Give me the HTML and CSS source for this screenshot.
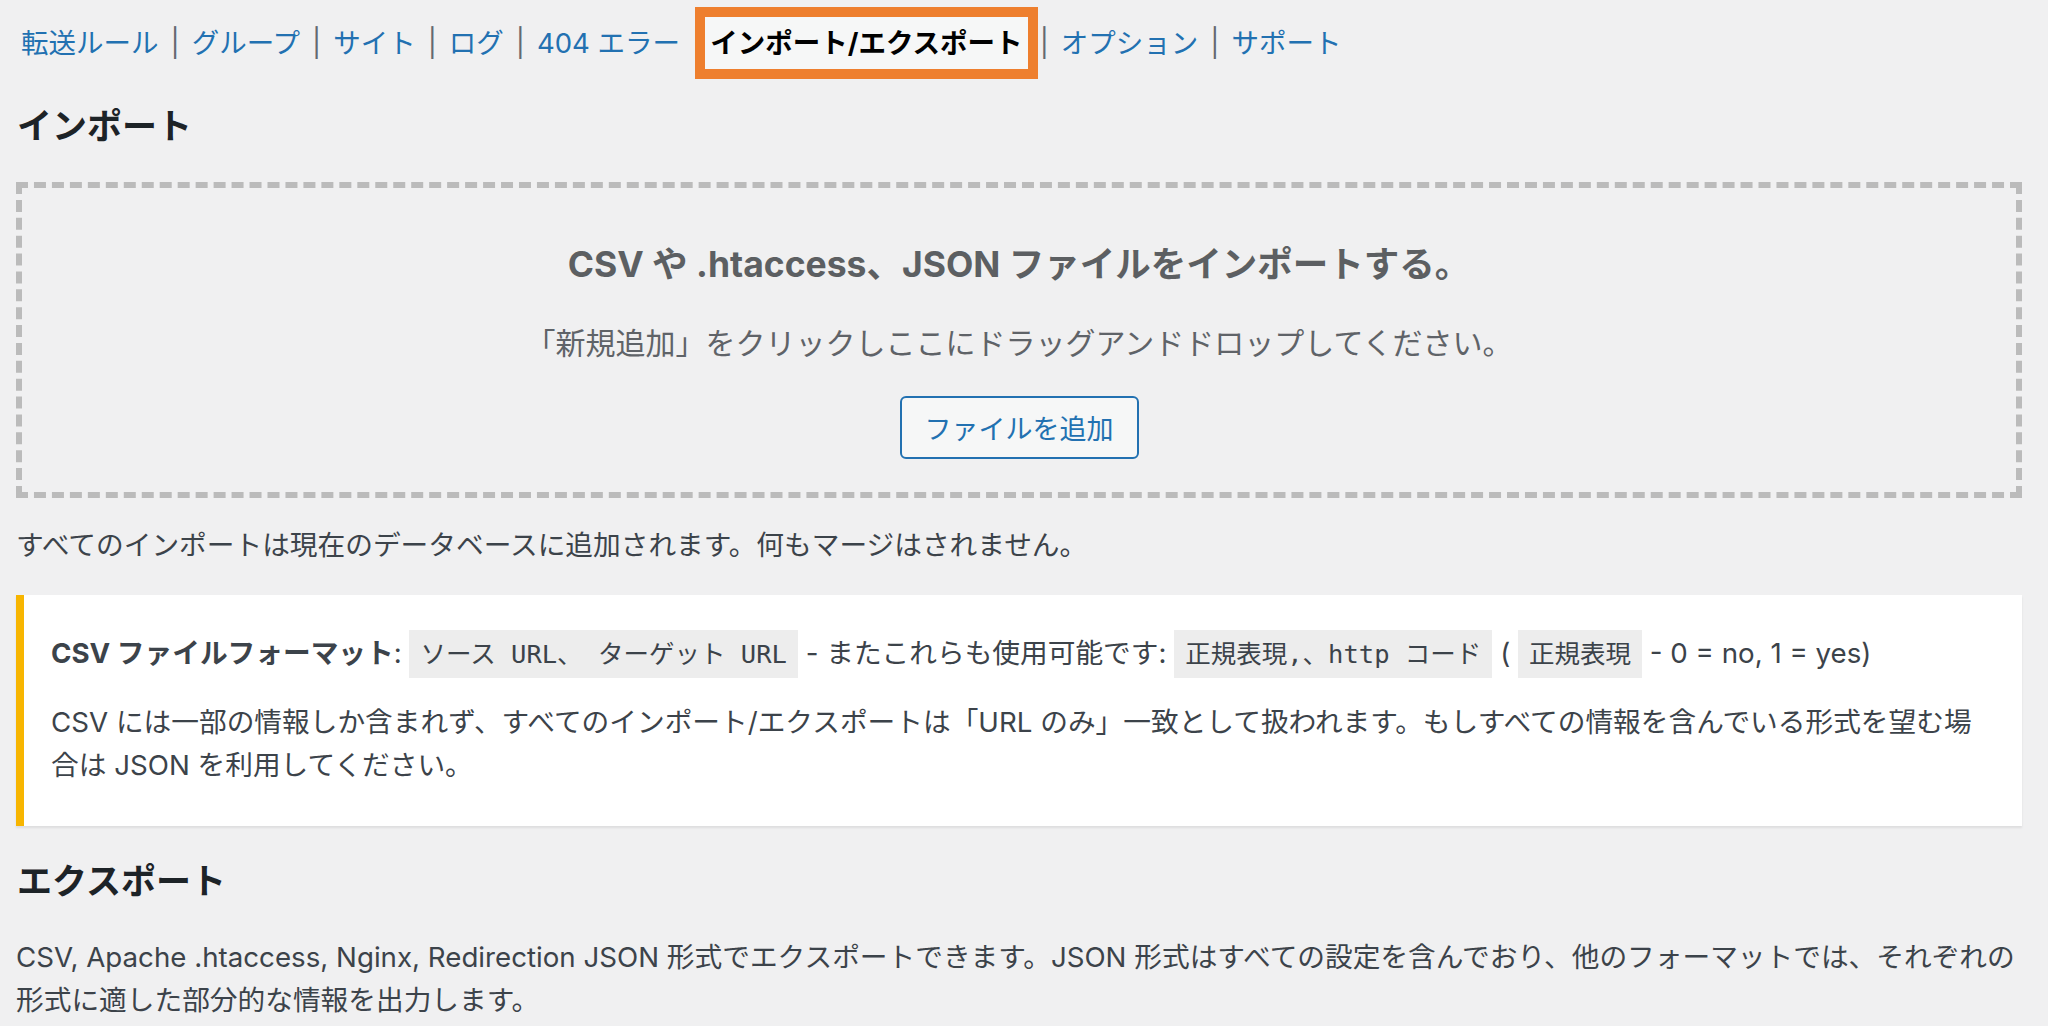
FILE: index.html
```html
<!DOCTYPE html>
<html lang="ja">
  <head>
    <meta charset="UTF-8" />
    <meta name="viewport" content="width=device-width, initial-scale=1.0" />
    <title>インポート/エクスポート ‹ Redirection</title>
    <link rel="stylesheet" href="styles.css">
  </head>
  <body>
    <div class="wrap">
      <ul class="subsubsub">
        <li><a href="#">転送ルール</a><span class="sep">|</span></li>
        <li><a href="#">グループ</a><span class="sep">|</span></li>
        <li><a href="#">サイト</a><span class="sep">|</span></li>
        <li><a href="#">ログ</a><span class="sep">|</span></li>
        <li><a href="#">404 エラー</a><span class="sep">|</span></li>
        <li><a href="#" class="current">インポート/エクスポート</a><span class="sep">|</span></li>
        <li><a href="#">オプション</a><span class="sep">|</span></li>
        <li><a href="#">サポート</a></li>
      </ul>

      <h2>インポート</h2>

      <div class="dropzone">
        <h3>CSV や .htaccess、JSON ファイルをインポートする。</h3>
        <p>「新規追加」をクリックしここにドラッグアンドドロップしてください。</p>
        <button type="button" class="button">ファイルを追加</button>
      </div>

      <p class="note">すべてのインポートは現在のデータベースに追加されます。何もマージはされません。</p>

      <div class="notice notice-warning">
        <p><strong>CSV ファイルフォーマット</strong>: <code>ソース URL、 ターゲット URL</code> - またこれらも使用可能です: <code>正規表現,、http コード</code> ( <code>正規表現</code> - 0 = no, 1 = yes)</p>
        <p>CSV には一部の情報しか含まれず、すべてのインポート/エクスポートは「URL のみ」一致として扱われます。もしすべての情報を含んでいる形式を望む場合は JSON を利用してください。</p>
      </div>

      <h2 class="export-title">エクスポート</h2>
      <p class="note export-note">CSV, Apache .htaccess, Nginx, Redirection JSON 形式でエクスポートできます。JSON 形式はすべての設定を含んでおり、他のフォーマットでは、それぞれの形式に適した部分的な情報を出力します。</p>
    </div>
  </body>
</html>
```

FILE: styles.css
```css
body {
  margin: 0;
  background-color: #f0f0f1;
  color: #3c434a;
  font-family: Inter, "Noto Sans CJK JP", sans-serif;
  font-size: 27.7px;
  line-height: 43px;
}

.wrap {
  padding: 17px 26px 0 16px;
}

/* tabs */
.subsubsub {
  list-style: none;
  margin: 0;
  padding: 0 0 0 5px;
  display: flex;
  align-items: center;
  height: 52px;
  line-height: 52px;
  font-size: 27.5px;
}

.subsubsub a {
  color: #2271b1;
  text-decoration: none;
}

.subsubsub .sep {
  color: #646970;
  margin: 0 12px;
}

.subsubsub a.current {
  display: inline-block;
  margin-left: -8px;
  color: #000;
  font-weight: 700;
  background-color: #f6f7f7;
  padding: 0 5px;
  outline: 10px solid #ee7f2e;
}

h2 {
  margin: 34px 0 0 1px;
  font-size: 35px;
  line-height: 46px;
  font-weight: 700;
  color: #1d2327;
}

/* import drop area */
.dropzone {
  margin-top: 33px;
  border: 6px dashed #bbb;
  padding: 55px 20px 33px;
  display: flex;
  flex-direction: column;
  align-items: center;
  text-align: center;
}

.dropzone h3 {
  margin: 0;
  font-size: 35.5px;
  line-height: 44px;
  font-weight: 700;
  color: #5c5f62;
}

.dropzone p {
  margin: 34px 0 0;
  font-size: 30px;
  line-height: 44px;
  color: #5f6368;
}

.button {
  margin-top: 31px;
  height: 63px;
  padding: 0 23px;
  border: 2px solid #2271b1;
  border-radius: 6px;
  background-color: #f6f7f7;
  color: #2271b1;
  font-family: inherit;
  font-size: 27px;
  cursor: pointer;
}

.note {
  margin: 26px 0 0;
}

/* notice */
.notice {
  margin-top: 28px;
  background: #fff;
  border-left: 8px solid #f7b500;
  box-shadow: 0 2px 2px rgba(0, 0, 0, 0.08);
  padding: 37px 30px 39px 27px;
  display: flex;
  flex-direction: column;
  gap: 25px;
}

.notice p {
  margin: 0;
}

.notice strong {
  font-weight: 700;
}

code {
  font-family: "DejaVu Sans Mono", "Noto Sans CJK JP", monospace;
  font-size: 25.5px;
  background-color: rgba(0, 0, 0, 0.07);
  padding: 9px 11px;
}

.export-title {
  margin-top: 32px;
}

.export-note {
  margin-top: 32px;
}
```
